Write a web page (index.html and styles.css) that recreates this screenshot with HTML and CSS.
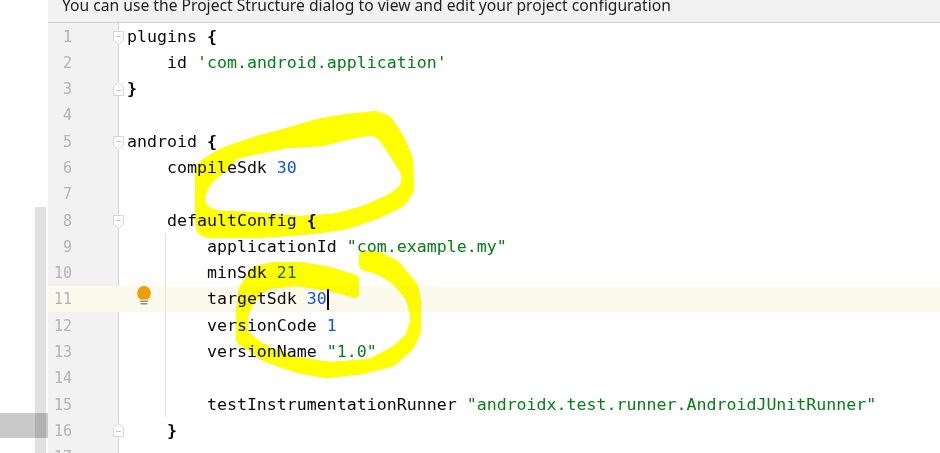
FILE: index.html
```html
<!DOCTYPE html>
<html lang="en">
<head>
<meta charset="utf-8">
<title>build.gradle</title>
<link rel="stylesheet" href="styles.css">
</head>
<body>
<div class="app">
  <aside class="side">
    <div class="stripe"></div>
    <div class="band"></div>
  </aside>
  <main class="main">
    <div class="notice"><span class="notice-text">You can use the Project Structure dialog to view and edit your project configuration</span></div>
    <div class="editor">
      <div class="row"><span class="num">1</span><svg class="fold" viewBox="0 0 11 14"><path class="fold-shape" d="M.5.5h10v9l-5 4-5-4z"/><path class="fold-minus" d="M3 5.5h5"/></svg><code class="code">plugins <b class="brace">{</b></code></div>
      <div class="row"><span class="num">2</span><code class="code">    id <span class="str">'com.android.application'</span></code></div>
      <div class="row"><span class="num">3</span><svg class="fold fold-end" viewBox="0 0 11 14"><path class="fold-shape" d="M.5 13.500h10v-9l-5-4-5 4z"/><path class="fold-minus" d="M3 8.500h5"/></svg><code class="code"><b class="brace">}</b></code></div>
      <div class="row"><span class="num">4</span><code class="code"></code></div>
      <div class="row"><span class="num">5</span><svg class="fold" viewBox="0 0 11 14"><path class="fold-shape" d="M.5.5h10v9l-5 4-5-4z"/><path class="fold-minus" d="M3 5.5h5"/></svg><code class="code">android <b class="brace">{</b></code></div>
      <div class="row"><span class="num">6</span><code class="code">    compileSdk <span class="lit">30</span></code></div>
      <div class="row"><span class="num">7</span><code class="code"></code></div>
      <div class="row"><span class="num">8</span><svg class="fold" viewBox="0 0 11 14"><path class="fold-shape" d="M.5.5h10v9l-5 4-5-4z"/><path class="fold-minus" d="M3 5.5h5"/></svg><code class="code">    defaultConfig <b class="brace">{</b></code></div>
      <div class="row guide"><span class="num">9</span><code class="code">        applicationId <span class="str">"com.example.my"</span></code></div>
      <div class="row guide"><span class="num">10</span><code class="code">        minSdk <span class="num-lit">21</span></code></div>
      <div class="row guide current"><span class="num">11</span><svg class="bulb" viewBox="0 0 14 19"><path class="bulb-glass" d="M3.200 13.400C1.400 12 .2 9.700.2 7 .2 3.200 3.200.1 7 .1s6.800 3.100 6.800 6.900c0 2.700-1.200 5-3 6.400z"/><path class="bulb-base" d="M3.200 14.600h7.600v1.500H3.200zM3.800 16.900h6.400v1.500H3.800z"/></svg><code class="code">        targetSdk <span class="lit">30</span><span class="caret"></span></code></div>
      <div class="row guide"><span class="num">12</span><code class="code">        versionCode <span class="lit">1</span></code></div>
      <div class="row guide"><span class="num">13</span><code class="code">        versionName <span class="str">"1.0"</span></code></div>
      <div class="row guide"><span class="num">14</span><code class="code"></code></div>
      <div class="row guide"><span class="num">15</span><code class="code">        testInstrumentationRunner <span class="str">"androidx.test.runner.AndroidJUnitRunner"</span></code></div>
      <div class="row"><span class="num">16</span><svg class="fold fold-end" viewBox="0 0 11 14"><path class="fold-shape" d="M.5 13.500h10v-9l-5-4-5 4z"/><path class="fold-minus" d="M3 8.500h5"/></svg><code class="code">    <b class="brace">}</b></code></div>
      <div class="row"><span class="num">17</span><code class="code"></code></div>
    </div>
  </main>
</div>
<svg class="marker" viewBox="0 0 940 453" aria-hidden="true">
  <defs>
    <filter id="brush" x="0" y="0" width="100%" height="100%" color-interpolation-filters="sRGB">
      <feGaussianBlur stdDeviation="2.4"/>
      <feColorMatrix values="1 0 0 0 0  0 1 0 0 0  0 0 1 0 0  0 0 0 10 -4.200"/>
    </filter>
  </defs>
  <g filter="url(#brush)">
    <path class="ink" fill-rule="evenodd" d="M195 167 L203 159 L220 149 L233 144 L257 136 L287 128 L317 119 L347 114 L377 111 L391 117 L404 137 L413 158 L414 192 L404 206 L377 219 L347 229 L313 234 L257 238 L207 238 L197 233 L195 218 L195 188 Z M204 200 L207 190 L216 178 L230 169 L235 159 L257 154 L287 148 L323 146 L350 139 L372 135 L379 139 L392 159 L402 175 L401 185 L390 194 L363 206 L333 214 L300 216 L250 212 L220 211 L208 207 Z"/>
    <path class="ink" d="M359 251 L380 252 L398 261 L418 285 L421 302 L421 332 L413 349 L394 366 L363 374 L327 378 L297 373 L263 361 L247 349 L236 343 L236 312 L239 288 L252 267 L273 262 L300 262 L330 267 L359 276 L359 299 L330 291 L297 286 L267 289 L254 302 L248 315 L247 331 L263 344 L297 357 L330 362 L370 359 L392 347 L406 335 L411 318 L406 299 L392 283 L377 274 L359 269 Z"/>
  </g>
</svg>
</body>
</html>
```

FILE: styles.css
```css
html, body {
  margin: 0;
  height: 453px;
  overflow: hidden;
  background: #fff;
}

.app {
  display: flex;
  height: 453px;
}

.side {
  position: relative;
  flex: 0 0 48px;
  padding: 207px 2px 0 35px;
  box-sizing: border-box;
}

.stripe {
  height: 246px;
  background: #e1e1e1;
}

.band {
  position: absolute;
  left: 0;
  right: 0;
  top: 413px;
  height: 25px;
  background: rgba(0, 0, 0, .21);
}

.main {
  flex: 1;
  min-width: 0;
  position: relative;
}

.notice {
  height: 22px;
  background: #f2f2f2;
  border-bottom: 1px solid #d1d1d1;
  padding-left: 14px;
  overflow: hidden;
}

.notice-text {
  display: block;
  margin-top: -7px;
  font: 15.65px/24px "Noto Sans", sans-serif;
  color: #1f1f1f;
  white-space: nowrap;
}

.editor {
  display: grid;
  grid-auto-rows: 26.29px;
  background: linear-gradient(to right, #f2f2f2 70px, #d4d4d4 70px, #d4d4d4 71px, #fff 71px);
}

.row {
  position: relative;
  display: flex;
  align-items: center;
  box-sizing: border-box;
  padding-top: 1px;
  font-size: 0;
}

.current {
  background: #fcfaed;
}

.num {
  box-sizing: border-box;
  flex: 0 0 79px;
  padding-right: 55px;
  text-align: right;
  font: 15px/26px "DejaVu Sans Mono", monospace;
  color: #b4b4b4;
}

.code {
  font: 16.6px/26px "DejaVu Sans Mono", monospace;
  color: #0a0a0a;
  white-space: pre;
}

.brace { font-weight: 700; }
.str { color: #067d17; }
.lit { color: #1750eb; }
.num-lit { color: #1a6a10; }

.caret {
  display: inline-block;
  width: 2px;
  height: 21px;
  margin-right: -2px;
  vertical-align: middle;
  background: #000;
}

.guide::before {
  content: "";
  position: absolute;
  left: 117px;
  top: 0;
  bottom: 0;
  width: 1px;
  background: #e4e4e4;
}

.fold {
  position: absolute;
  left: 65px;
  top: 8px;
  width: 11px;
  height: 14px;
}

.fold-end {
  top: 6px;
}

.fold-shape {
  fill: #fff;
  stroke: #d6d6d6;
}

.fold-minus {
  fill: none;
  stroke: #c4c4c4;
}

.bulb {
  position: absolute;
  left: 89px;
  top: 0;
  width: 14px;
  height: 19px;
}

.bulb-glass { fill: #ee9f06; }
.bulb-base { fill: #8a8a8a; }

.marker {
  position: absolute;
  left: 0;
  top: 0;
  width: 940px;
  height: 453px;
  mix-blend-mode: multiply;
  pointer-events: none;
}

.ink { fill: #ff0; }
```
